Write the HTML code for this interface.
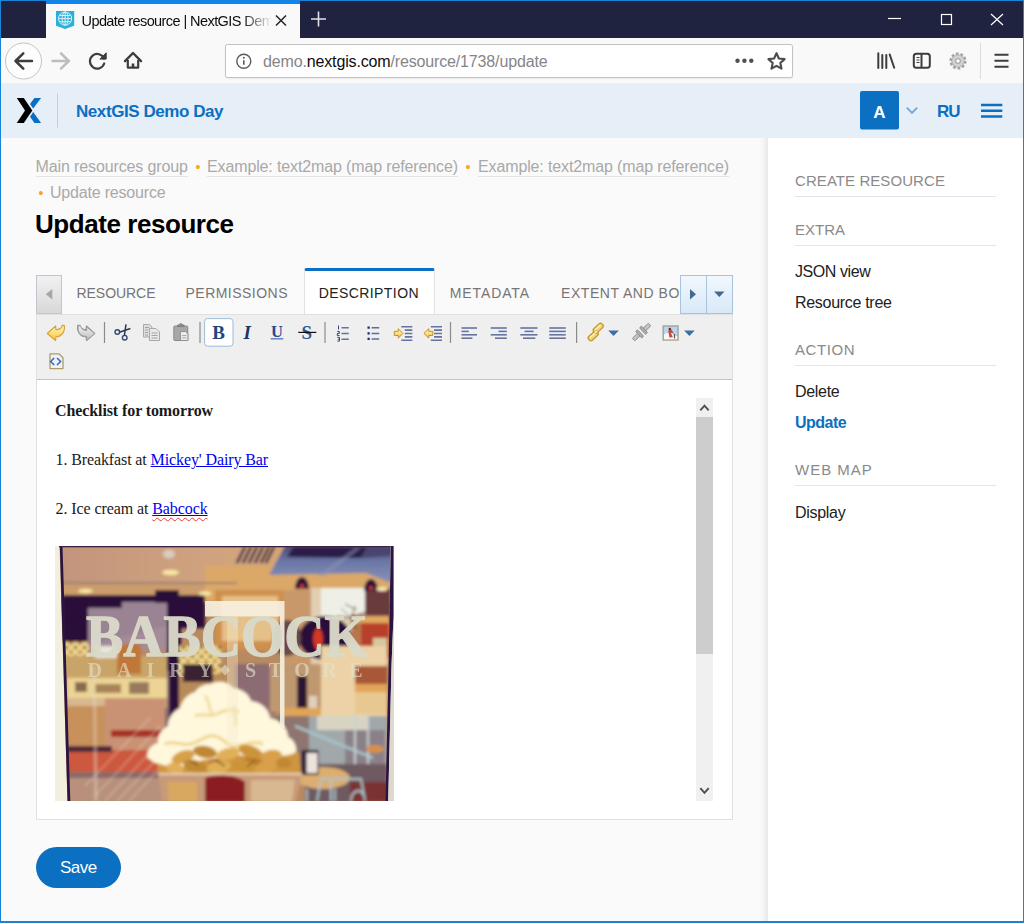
<!DOCTYPE html>
<html><head><meta charset="utf-8">
<style>
*{box-sizing:border-box;margin:0;padding:0}
html,body{width:1024px;height:923px;overflow:hidden;background:#fafafa;font-family:"Liberation Sans",sans-serif}
.abs{position:absolute}
#win{position:absolute;left:0;top:0;width:1024px;height:923px;overflow:hidden}
/* window border */
#bl{left:0;top:0;width:1.200px;height:923px;background:#1883d7}
#br{left:1022.800px;top:0;width:1.200px;height:923px;background:#1883d7}
#bb{left:0;top:921.400px;width:1024px;height:1.600px;background:#1883d7}
#bt{left:0;top:0;width:1024px;height:1px;background:#1883d7}
#titlebar{left:1px;top:1px;width:1022px;height:37px;background:#202340}
#tab{left:46px;top:0;width:254px;height:38px;background:#f9f9fa}
#tabline{left:46px;top:0;width:254px;height:3.5px;background:#0a84ff}
#tabtitle{left:81.500px;top:13.200px;font-size:14.500px;color:#0c0c0d;white-space:nowrap;width:190px;overflow:hidden;line-height:16px;-webkit-mask-image:linear-gradient(90deg,#000 0,#000 160px,transparent 190px);mask-image:linear-gradient(90deg,#000 0,#000 160px,transparent 190px)}
#navbar{left:1px;top:38px;width:1022px;height:45px;background:#f9f9fa}
#urlbar{left:225.300px;top:43.700px;width:567.700px;height:33.900px;background:#fff;border:1px solid #c2c2c3;border-radius:2.500px;box-shadow:0 1px 2px rgba(0,0,0,.06)}
#urltext{left:263px;top:52px;font-size:16px;line-height:20px;color:#858587;white-space:nowrap}
#urltext b{font-weight:normal;color:#0c0c0d}
#header{left:1px;top:83px;width:1022px;height:54.5px;background:#e6eef8}
#main{left:1px;top:137.5px;width:767px;height:784px;background:#fafafa}
#side{left:767.700px;top:137.5px;width:255.300px;height:784px;background:#fff}
#sideshadow{left:759px;top:137.5px;width:8.700px;height:784px;background:linear-gradient(90deg,rgba(0,0,0,0),rgba(0,0,0,.015) 40%,rgba(0,0,0,.075))}

#apptitle{left:76px;top:101.3px;font-size:17px;font-weight:700;color:#0b6fc2;letter-spacing:-.43px;line-height:22px;white-space:nowrap}
#abtn{left:860px;top:101.5px;width:39px;text-align:center;font-size:17px;font-weight:700;color:#fff;line-height:22px}
#ru{left:937px;top:101.3px;font-size:17px;font-weight:700;color:#0b6fc2;line-height:22px;letter-spacing:-1px}
#tabtitle{letter-spacing:-.58px}
#urltext{letter-spacing:-.15px}

.bc{font-size:16px;line-height:20px;color:#a9a9a9;white-space:nowrap}
.bc .l{border-bottom:1px solid #e3e3e3;padding-bottom:1px}
.dot{font-size:14px;line-height:20px;color:#f6a623}
#h1{left:35px;top:208px;font-size:26px;font-weight:700;line-height:32px;color:#000;letter-spacing:-.44px;white-space:nowrap}
#tleft{left:36px;top:275px;width:25.5px;height:38.5px;background:linear-gradient(#f1f1f1,#d8d8d8);border:1px solid #c0c6cf}
.tabt{top:284px;font-size:14px;line-height:18px;color:#757575;white-space:nowrap}
#acttab{left:304px;top:267.500px;width:130.5px;height:46.500px;background:#fff;border-top:3px solid #0b6fc2;border-left:1px solid #e2e2e2;border-right:1px solid #e2e2e2;border-radius:2.500px 2.500px 0 0;z-index:2}
#tright{left:680px;top:275px;width:27px;height:38.5px;background:linear-gradient(#f1f7fd,#d9e8f8);border:1px solid #a9c3de}
#tmenu{left:706px;top:275px;width:27px;height:38.5px;background:linear-gradient(#f1f7fd,#d9e8f8);border:1px solid #a9c3de}
#toolbar{left:36px;top:313.5px;width:697px;height:66.5px;background:#efefef;border-left:1px solid #e0e0e0;border-right:1px solid #e0e0e0;border-bottom:1px solid #b9c5d3;border-top:1px solid #e0e0e0}
#editor{left:36px;top:380px;width:697px;height:440px;background:#fff;border:1px solid #e0e0e0;border-top:none}
#sbtrack{left:696px;top:398px;width:17px;height:403px;background:#f0f0f0}
#sbthumb{left:696px;top:417px;width:17px;height:236.5px;background:#cdcdcd}
.ed{font-family:"Liberation Serif",serif;font-size:16px;line-height:20px;color:#1a1a1a;white-space:nowrap}
.ed a{color:#0000ee;text-decoration:underline}
.ed .sp{text-decoration:underline wavy #e8383a;text-decoration-thickness:1px;text-underline-offset:3px;text-decoration-skip-ink:none}

#save{left:36px;top:847px;width:84.5px;height:40.5px;border-radius:21px;background:#0b6fc2;color:#fff;font-size:17px;line-height:41.5px;text-align:center;letter-spacing:-.5px}
.sh{left:795px;font-size:15px;line-height:18px;color:#8a8a8a;white-space:nowrap}
.sl{left:795px;width:201px;height:1px;background:#dfe6ed}
.si{left:795px;font-size:16px;line-height:20px;color:#212121;white-space:nowrap}
</style></head><body>
<div id="win">
<div class="abs" id="titlebar"></div>
<div class="abs" id="tab"></div>
<div class="abs" id="tabline"></div>
<div class="abs" id="tabtitle">Update resource | NextGIS Dem</div>
<div class="abs" id="navbar"></div>
<div class="abs" id="urlbar"></div>
<div class="abs" id="urltext">demo.<b>nextgis.com</b>/resource/1738/update</div>
<div class="abs" id="header"></div>

<svg class="abs" id="chromesvg" style="left:0;top:0" width="1024" height="140" viewBox="0 0 1024 140">
 <!-- favicon -->
 <path d="M56 11h18.200v14.700l-9.100 3.300-9.100-3.300z" fill="#2ab0d9"/>
 <g fill="none" stroke="#d9f1f9" stroke-width="1">
  <circle cx="65.100" cy="18.600" r="6.600"/>
  <ellipse cx="65.100" cy="18.600" rx="3" ry="6.600"/>
  <path d="M58.500 18.600h13.200M65.100 12v13.200M59.500 15.500h11.200M59.500 21.700h11.200"/>
 </g>
 <!-- tab close -->
 <path d="M276 15.5l10 10M286 15.5l-10 10" stroke="#2a2a2e" stroke-width="1.6" fill="none"/>
 <!-- new tab plus -->
 <path d="M311 19h15M318.5 11.5v15" stroke="#e0e0e6" stroke-width="1.6" fill="none"/>
 <!-- window controls -->
 <path d="M888 18.5h13" stroke="#fff" stroke-width="1.2"/>
 <rect x="941.5" y="14.5" width="10" height="10" fill="none" stroke="#fff" stroke-width="1.2"/>
 <path d="M991 14l12 11M1003 14l-12 11" stroke="#fff" stroke-width="1.2" fill="none"/>
 <!-- back -->
 <circle cx="23.5" cy="61" r="18" fill="#fdfdfd" stroke="#c4c4c6" stroke-width="1"/>
 <path d="M32 61H15.5M23.3 53.4L15.5 61l7.8 7.6" fill="none" stroke="#3d3d3f" stroke-width="2.5" stroke-linecap="round" stroke-linejoin="round"/>
 <!-- forward -->
 <path d="M52.5 61H69M61 53.4l7.8 7.6-7.8 7.6" fill="none" stroke="#bdbdbe" stroke-width="2.5" stroke-linecap="round" stroke-linejoin="round"/>
 <!-- reload -->
 <path d="M104 58.5A7.3 7.3 0 1 0 104.2 63.5" fill="none" stroke="#3d3d3f" stroke-width="2.2" stroke-linecap="round"/>
 <path d="M106.2 52.8v6.3h-6.3z" fill="#3d3d3f" stroke="#3d3d3f" stroke-width="1" stroke-linejoin="round"/>
 <!-- home -->
 <path d="M125 61.2l8-8.2 8 8.2" fill="none" stroke="#3d3d3f" stroke-width="2.4" stroke-linecap="round" stroke-linejoin="round"/>
 <path d="M127.8 60v7.6h10.4V60" fill="none" stroke="#3d3d3f" stroke-width="2.2" stroke-linejoin="round"/>
 <rect x="131.7" y="63.5" width="2.6" height="4" fill="#3d3d3f"/>
 <!-- info -->
 <circle cx="243.8" cy="61.2" r="7" fill="none" stroke="#5a5a5c" stroke-width="1.4"/>
 <path d="M243.8 60.2v4.6" stroke="#5a5a5c" stroke-width="1.6"/><circle cx="243.8" cy="57.7" r="1" fill="#5a5a5c"/>
 <!-- dots -->
 <circle cx="737.500" cy="60.700" r="2.200" fill="#505052"/><circle cx="744.400" cy="60.700" r="2.200" fill="#505052"/><circle cx="751.300" cy="60.700" r="2.200" fill="#505052"/>
 <!-- star -->
 <path d="M776.5 53.2l2.4 5.3 5.7.6-4.3 3.9 1.2 5.7-5-2.9-5 2.9 1.2-5.7-4.3-3.9 5.7-.6z" fill="none" stroke="#4c4c4e" stroke-width="2.100" stroke-linejoin="round"/>
 <!-- library -->
 <path d="M878.300 53.300v14.700M882.300 55v13M886.300 55v13M889.700 54.500l4.500 13.300" stroke="#3d3d3f" stroke-width="2" stroke-linecap="round" fill="none"/>
 <!-- sidebar -->
 <rect x="913.8" y="53.8" width="16" height="14" rx="2.5" fill="none" stroke="#3d3d3f" stroke-width="2"/>
 <path d="M921.5 54v14" stroke="#3d3d3f" stroke-width="2"/>
 <path d="M916.5 57.5h3M916.5 60h3M916.5 62.5h3" stroke="#3d3d3f" stroke-width="1"/>
 <!-- gear -->
 <circle cx="958" cy="61" r="6.800" fill="#bcbcbc" stroke="#a2a2a2" stroke-width="3.600" stroke-dasharray="2.500 1.770"/>
 <circle cx="958" cy="61" r="6.200" fill="#c4c4c4"/>
 <circle cx="958" cy="61" r="4.300" fill="none" stroke="#d8d8d8" stroke-width="1.400"/>
 <circle cx="958" cy="61" r="2.300" fill="#fbfbfb" stroke="#989898" stroke-width=".9"/>
 <!-- sep -->
 <path d="M980.5 42.5v36.5" stroke="#dcdcdd" stroke-width="1"/>
 <!-- hamburger -->
 <path d="M994.5 54.7h14M994.5 60.7h14M994.5 66.7h14" stroke="#3d3d3f" stroke-width="2"/>
 <!-- logo -->
 <path d="M16.8 98h7l8.5 12.4-8.5 12.5h-7l8.2-12.5z" fill="#000"/>
 <path d="M34.4 98h6.7l-7.9 10.5-3.2-4.4z" fill="#0b70c4"/>
 <path d="M30 116.7l3.2-4.7 7.9 10.9h-6.7z" fill="#0b70c4"/>
 <path d="M57.5 93.3v34.2" stroke="#b9d1ea" stroke-width="1"/>
 <!-- A button -->
 <rect x="860" y="91" width="39" height="38.5" rx="2" fill="#0b6fc2"/>
 <path d="M906.800 107.600l5.200 5.200 5.200-5.200" fill="none" stroke="#6fa9dc" stroke-width="1.900"/>
 <path d="M981 105h21.300M981 110.800h21.300M981 116.500h21.300" stroke="#0b6fc2" stroke-width="2.500"/>
</svg>
<div class="abs" id="apptitle">NextGIS Demo Day</div>
<div class="abs" id="abtn">A</div>
<div class="abs" id="ru">RU</div>
<div class="abs" id="main"></div>
<div class="abs" id="side"></div><div class="abs" id="sideshadow"></div>

<!-- breadcrumbs -->
<div class="abs bc" style="left:35.5px;top:157px"><span class="l" style="letter-spacing:-.12px">Main resources group</span></div>
<div class="abs dot" style="left:195.5px;top:157px">•</div>
<div class="abs bc" style="left:207px;top:157px"><span class="l" style="letter-spacing:-.13px">Example: text2map (map reference)</span></div>
<div class="abs dot" style="left:465.5px;top:157px">•</div>
<div class="abs bc" style="left:478px;top:157px"><span class="l" style="letter-spacing:-.13px">Example: text2map (map reference)</span></div>
<div class="abs dot" style="left:38.5px;top:182.5px">•</div>
<div class="abs bc" style="left:50px;top:182.5px"><span style="letter-spacing:-.19px">Update resource</span></div>
<div class="abs" id="h1">Update resource</div>
<!-- tabs -->
<div class="abs" id="tleft"></div>
<div class="abs tabt" style="left:76.5px;letter-spacing:-.05px">RESOURCE</div>
<div class="abs tabt" style="left:185.5px;letter-spacing:.48px">PERMISSIONS</div>
<div class="abs" id="acttab"></div>
<div class="abs tabt" style="left:318.7px;letter-spacing:.42px;color:#212121;z-index:3">DESCRIPTION</div>
<div class="abs tabt" style="left:449.7px;letter-spacing:.9px">METADATA</div>
<div class="abs tabt" style="left:561px;letter-spacing:.55px;width:119px;overflow:hidden">EXTENT AND BOU</div>
<div class="abs" id="tright"></div>
<div class="abs" id="tmenu"></div>
<!-- toolbar -->
<div class="abs" id="toolbar"></div>
<div class="abs" id="editor"></div>
<div class="abs" id="sbtrack"></div>
<div class="abs" id="sbthumb"></div>
<div class="abs ed" style="left:55px;top:401px;font-weight:700;letter-spacing:-.1px">Checklist for tomorrow</div>
<div class="abs ed" style="left:55.5px;top:450px;letter-spacing:-.11px">1. Breakfast at <a>Mickey' Dairy Bar</a></div>
<div class="abs ed" style="left:55.5px;top:499px;letter-spacing:-.09px">2. Ice cream at <a><span class="sp">Babcock</span></a></div>

<svg class="abs" id="tbsvg" style="left:0;top:260px" width="760" height="160" viewBox="0 260 760 160">
 <defs>
  <linearGradient id="gy" x1="0" y1="0" x2="0" y2="1"><stop offset="0" stop-color="#fff6cc"/><stop offset=".5" stop-color="#fbe07c"/><stop offset="1" stop-color="#f5c04a"/></linearGradient>
  <linearGradient id="gg" x1="0" y1="0" x2="0" y2="1"><stop offset="0" stop-color="#f2f2f2"/><stop offset="1" stop-color="#bdbdbd"/></linearGradient>
 </defs>
 <!-- tab scroll arrows -->
 <path d="M52.300 289v10.600l-6.500-5.300z" fill="#a6a6a6"/>
 <path d="M690 289v10.5l6-5.2z" fill="#3f6a94"/>
 <path d="M714 291.5h10.5l-5.2 5.5z" fill="#3f6a94"/>
 <!-- undo -->
 <path d="M47.300 333.500L55.600 326L55.900 329.700C59.300 329.700 61.800 328.300 62.300 325.200L64.300 325.400C65.200 331.600 62 336.600 55.900 336.800L55.600 340.500z" fill="url(#gy)" stroke="#d6a136" stroke-width="1.100" stroke-linejoin="round"/>
 <!-- redo -->
 <path d="M94.700 333.500L86.400 326L86.100 329.700C82.700 329.700 80.200 328.300 79.700 325.200L77.700 325.400C76.800 331.600 80 336.600 86.100 336.800L86.400 340.500z" fill="url(#gg)" stroke="#8e9494" stroke-width="1.100" stroke-linejoin="round"/>
 <path d="M94.700 333.600l-8-6.600v3.600c-3.400-.2-5.600-1.600-6.200-5l-2.200.3c-1.100 6.300 2.200 10.600 8.400 10.600v3.900z" fill="url(#gg)" stroke="#9c9c9c" stroke-width="1" stroke-linejoin="round"/>
 <path d="M104.500 322v21M200 322v21M325 322v21M450.500 322v21M576.600 322v21" stroke="#8b8b8b" stroke-width="1.200"/>
 <!-- cut -->
 <g fill="none" stroke="#34496b" stroke-width="1.400">
  <circle cx="117.300" cy="332" r="2.300"/><circle cx="124.700" cy="337.700" r="2.300"/>
  <path d="M119.400 332.300L130.400 328.500M124.400 335.400L126 324.300" stroke="#2c3a55" stroke-width="1.500"/>
 </g>
 <!-- copy -->
 <g stroke="#a9a9a9" stroke-width="1" fill="#dedede">
  <path d="M143.500 324.500h6l2.500 2.500v10h-8.500z"/>
  <path d="M149.500 328.500h6.500l3.500 3.500v8.500h-10z" fill="#e9e9e9"/>
 </g>
 <path d="M145 327.500h4M145 330h3M145 332.500h3M145 335h3M151.500 333h6M151.500 335.500h6M151.500 338h6" stroke="#9a9a9a" stroke-width=".9"/>
 <!-- paste -->
 <rect x="173.800" y="326" width="14" height="14.500" rx="1" fill="#a7a7a7" stroke="#8a8a8a" stroke-width="1"/>
 <path d="M177.500 326.500v-1.500h1.500l.8-1.200h2l.8 1.200h1.500v1.500z" fill="#8d8d8d" stroke="#7a7a7a" stroke-width=".8"/>
 <path d="M180.500 331.500h5l2.500 2.500v6.500h-7.500z" fill="#ececec" stroke="#8c8c8c" stroke-width=".9"/>
 <path d="M182 335.500h4.500M182 337.800h4.500" stroke="#9a9a9a" stroke-width=".8"/>
 <!-- bold btn -->
 <rect x="204.600" y="318.600" width="28.400" height="27.600" rx="3" fill="#fff" stroke="#9dbbdb" stroke-width="1"/>
 <text x="218.600" y="339" text-anchor="middle" font-family="Liberation Serif" font-weight="700" font-size="19" fill="#1b4682">B</text>
 <text x="247.200" y="339" text-anchor="middle" font-family="Liberation Serif" font-weight="700" font-style="italic" font-size="19" fill="#1c3660">I</text>
 <text x="277" y="337.400" text-anchor="middle" font-family="Liberation Serif" font-weight="700" font-size="16.500" fill="#23498f">U</text>
 <path d="M270.700 338.800h12.600" stroke="#5b7cbc" stroke-width="1.400"/>
 <text x="306.700" y="339.300" text-anchor="middle" font-family="Liberation Serif" font-weight="700" font-size="19" fill="#2a5597">S</text>
 <path d="M298.300 332.400h18" stroke="#111" stroke-width="1.200"/>
 <!-- numbered list -->
 <path d="M341.500 327.800h7.300M341.500 333.500h7.300M341.500 339.200h7.300" stroke="#6673a1" stroke-width="1.600"/>
 <path d="M338.500 325.500v4M337.300 331.500h2v2h-2v2h2.200M337.300 337.300h2.200v3.800h-2.200M337.800 339.200h1.700" stroke="#33478a" stroke-width="1" fill="none"/>
 <!-- bullet list -->
 <path d="M371.600 327.800h7.600M371.600 333.400h7.600M371.600 339h7.600" stroke="#5d6c9c" stroke-width="1.500"/>
 <path d="M367.500 327.700h2.200M367.500 333.300h2.200M367.500 338.900h2.200" stroke="#1b2b6a" stroke-width="2.200"/>
 <!-- outdent (arrow right) -->
 <path d="M401.300 326.800h11M404.800 330.100h7.500M404.800 333.500h7.500M404.800 336.900h7.500M401.300 340.200h11" stroke="#6673a1" stroke-width="1.600"/>
 <path d="M394.300 331.300h4v-2.600l4.600 4.700-4.600 4.700v-2.600h-4z" fill="url(#gy)" stroke="#c98f22" stroke-width="1" stroke-linejoin="round"/>
 <!-- indent (arrow left) -->
 <path d="M430.800 326.800h11.200M434 330.100h8M434 333.500h8M434 336.900h8M430.800 340.200h11.200" stroke="#6673a1" stroke-width="1.600"/>
 <path d="M432.800 331.300h-4v-2.600l-4.900 4.700 4.900 4.700v-2.600h4z" fill="url(#gy)" stroke="#c98f22" stroke-width="1" stroke-linejoin="round"/>
 <!-- aligns -->
 <path d="M461.5 328H477" stroke="#6673a1" stroke-width="1.6"/><path d="M461.5 331.4H468.8" stroke="#6673a1" stroke-width="1.6"/><path d="M461.5 334.8H477" stroke="#6673a1" stroke-width="1.6"/><path d="M461.5 338.2H472.4" stroke="#6673a1" stroke-width="1.6"/><path d="M490.7 328H506.8" stroke="#6673a1" stroke-width="1.6"/><path d="M498.5 331.4H506.8" stroke="#6673a1" stroke-width="1.6"/><path d="M490.7 334.8H506.8" stroke="#6673a1" stroke-width="1.6"/><path d="M495 338.2H506.8" stroke="#6673a1" stroke-width="1.6"/><path d="M520.3 328H537.5" stroke="#6673a1" stroke-width="1.6"/><path d="M524.6 331.4H533.6" stroke="#6673a1" stroke-width="1.6"/><path d="M520.3 334.8H537.5" stroke="#6673a1" stroke-width="1.6"/><path d="M523 338.2H535.3" stroke="#6673a1" stroke-width="1.6"/><path d="M549.3 328H565.8" stroke="#6673a1" stroke-width="1.6"/><path d="M549.3 331.4H565.8" stroke="#6673a1" stroke-width="1.6"/><path d="M549.3 334.8H565.8" stroke="#6673a1" stroke-width="1.6"/><path d="M549.3 338.2H565.8" stroke="#6673a1" stroke-width="1.6"/>
 <!-- link -->
 <g transform="rotate(-43 595.800 332.100)" stroke-linejoin="round">
  <rect x="585.600" y="330.500" width="11.500" height="5.200" rx="2.400" fill="#f3d67a" stroke="#c39a2c" stroke-width="1.300"/>
  <rect x="594.500" y="328.300" width="11.500" height="5.200" rx="2.400" fill="#f3d67a" stroke="#c39a2c" stroke-width="1.300"/>
  <path d="M588 332.200h7M597 330h7" stroke="#fdf2c0" stroke-width="1.200"/>
  <rect x="594.300" y="330.900" width="3.200" height="2.400" rx="1" fill="#f4f4f4" stroke="#c39a2c" stroke-width=".7"/>
 </g>
 <path d="M608.200 330.400h10.600l-5.300 5.700z" fill="#3f6f9f"/>
 <!-- unlink -->
 <g transform="rotate(-43 641.500 332)">
  <rect x="630.500" y="330.300" width="8" height="3.600" rx="1" fill="#c4c4c4" stroke="#8a8a8a" stroke-width=".9"/>
  <rect x="637.500" y="327.600" width="2.600" height="9" rx=".8" fill="#b0b0b0" stroke="#858585" stroke-width=".9"/>
  <rect x="644.500" y="330.300" width="8" height="3.600" rx="1" fill="#c4c4c4" stroke="#8a8a8a" stroke-width=".9"/>
  <rect x="642.900" y="327.600" width="2.600" height="9" rx=".8" fill="#b0b0b0" stroke="#858585" stroke-width=".9"/>
 </g>
 <!-- image -->
 <rect x="663.200" y="326" width="14.800" height="14" fill="#b9d3f3" stroke="#aaa694" stroke-width="1.500"/>
 <path d="M664 334.500l3-1.500 3 1 3 2 2-.5 2.200 1v2.700h-13.200z" fill="#f7f9fc"/>
 <path d="M668.200 330.600l3-1.400 2.200 3.400-.6 4.600-3.400.2z" fill="#d2473c"/>
 <path d="M671.600 333l2.800 5.400" stroke="#fff" stroke-width="1.300"/>
 <path d="M674.500 334v4.500" stroke="#4a5a60" stroke-width="1.200"/>
 <circle cx="669.800" cy="329" r="1.200" fill="#4a3028"/>
 <path d="M684.100 330.400h10.600l-5.300 5.700z" fill="#3f6f9f"/>
 <!-- source -->
 <path d="M50 353.800h9l4 4v10.800h-13z" fill="#edf1f8" stroke="#b09a6b" stroke-width="1.300" stroke-linejoin="round"/>
 <path d="M54.200 358l-3.600 3.500 3.600 3.500M57 358l3.600 3.500-3.600 3.500" fill="none" stroke="#3468b3" stroke-width="1.500"/>
 <!-- editor scrollbar arrows -->
 <path d="M700.300 410.300l4.200-4.600 4.200 4.600" fill="none" stroke="#505050" stroke-width="2"/>
</svg>
<svg class="abs" style="left:690px;top:780px" width="30" height="25" viewBox="690 780 30 25"><path d="M700.300 788.200l4.200 4.600 4.200-4.600" fill="none" stroke="#505050" stroke-width="2"/></svg>
<!--PHOTO--><svg class="abs" id="photo" style="left:55px;top:546px" width="338.5" height="255" viewBox="0 0 338.5 255" preserveAspectRatio="none">
 <defs>
  <filter id="b1" x="-5%" y="-5%" width="110%" height="110%"><feGaussianBlur stdDeviation="1.4"/></filter>
  <filter id="b2" x="-5%" y="-5%" width="110%" height="110%"><feGaussianBlur stdDeviation="2.2"/></filter>
  <filter id="b0"><feGaussianBlur stdDeviation=".5"/></filter>
  <linearGradient id="ceil" x1="0" y1="0" x2="1" y2="0"><stop offset="0" stop-color="#c2947c"/><stop offset=".45" stop-color="#cfa37e"/><stop offset="1" stop-color="#d9a96e"/></linearGradient>
  <linearGradient id="blu" x1="0" y1="0" x2="0" y2="1"><stop offset="0" stop-color="#4a4874"/><stop offset=".4" stop-color="#6a76a6"/><stop offset="1" stop-color="#8a94b6"/></linearGradient>
  <pattern id="dots" width="9" height="9" patternUnits="userSpaceOnUse"><rect width="9" height="9" fill="#ecd488"/><circle cx="2.5" cy="2.5" r="1.5" fill="#3a1a30"/><circle cx="7" cy="7" r="1.5" fill="#a8402a"/></pattern>
  <clipPath id="pc"><rect width="338.5" height="255"/></clipPath>
 </defs>
 <g clip-path="url(#pc)">
 <rect width="338.5" height="255" fill="#b88a62"/>
 <g filter="url(#b1)">
  <!-- ceiling -->
  <rect x="0" y="0" width="338.5" height="52" fill="url(#ceil)"/>
  <rect x="6" y="37" width="175" height="13" fill="#cb9c6c"/>
  <rect x="150" y="20" width="188" height="36" fill="#dba868"/>
  <path d="M7 37H182" stroke="#8c7672" stroke-width="1.600"/>
  <!-- dark band -->
  <path d="M7 49H150V82H60L30 96H7z" fill="#2a1038"/>
  <!-- brick reflection -->
  <path d="M33 62H67V56H112V104H33z" fill="#a48c98"/>
  <path d="M33 62H67V56H112V80L33 100z" fill="#9a8494"/>
  <!-- dark column -->
  <rect x="100" y="44" width="24" height="13" fill="#2a1038"/><rect x="112" y="55" width="14" height="85" fill="#2a1038"/>
  <rect x="114" y="120" width="10" height="68" fill="#2a1038"/>
  <rect x="101" y="125" width="13" height="62" fill="#8a6a70"/>
  <!-- vent -->
  <path d="M187 0H221L210 18H178z" fill="#c8a080"/>
  <path d="M190 1l-8 16M196 1l-8 16M202 1l-8 16M208 1l-8 16M214 1l-8 16M219 1l-8 16" stroke="#3a1c30" stroke-width="2.6"/>
  <!-- blue area top right -->
  <path d="M230 0H338V38L311 27L214 29z" fill="url(#blu)"/>
  <path d="M238 1H312L306 12L232 11z" fill="#2c1c46"/><path d="M312 1H338V10L306 12z" fill="#4a4470"/>
  <path d="M262 30L300 2L306 2L270 30z" fill="#8a90b8" opacity=".55"/>
  <!-- wood frame & interior right -->
  <rect x="160" y="44" width="70" height="60" fill="#cf8f4e"/>
  <rect x="167" y="50" width="56" height="45" fill="#e6c089"/>
  <rect x="228" y="44" width="40" height="120" fill="#c8986a"/>
  <!-- window -->
  <rect x="266" y="42" width="46" height="28" fill="#eef0e6"/><rect x="266" y="70" width="30" height="34" fill="#dccdb0"/><rect x="296" y="68" width="16" height="36" fill="#b87850"/>
  <path d="M286 62l10 10l4-12M296 72l6 12M290 58l12 6M296 72l14-6M282 70l14 2" stroke="#4a4038" stroke-width=".9" fill="none"/>
  <rect x="256" y="42" width="10" height="130" fill="#e2cfb2"/>
  <!-- right shelf -->
  <rect x="310" y="42" width="26" height="34" fill="#6a3a3c"/>
  <rect x="300" y="70" width="34" height="7" fill="#e0a860"/>
  <rect x="306" y="77" width="28" height="38" fill="#b8402c"/>
  <rect x="318" y="92" width="14" height="14" fill="#d8c8a0"/>
  <rect x="300" y="112" width="34" height="6" fill="#d8a060"/>
  <!-- lamps -->
  <path d="M240 43a7 12 0 0 1 14 0z" fill="#2a1038"/><circle cx="247" cy="40" r="2" fill="#d8402c"/>
  <path d="M309 45a7 12 0 0 1 14 0z" fill="#2a1038"/><circle cx="316" cy="42" r="2" fill="#d8402c"/>
  <ellipse cx="327" cy="43" rx="6" ry="2" fill="#f8e8b0"/>
  <!-- lights -->
  <ellipse cx="30.500" cy="45" rx="7.500" ry="2.200" fill="#f8e6a4"/>
  <ellipse cx="115.500" cy="26.500" rx="8.500" ry="2.800" fill="#f8e6a4"/>
  <ellipse cx="150" cy="47.500" rx="6.500" ry="2.200" fill="#f8e6a4"/>
  <ellipse cx="114" cy="8" rx="6" ry="4.500" fill="#dccabc"/>
  <!-- mid band -->
  <rect x="8" y="96" width="26" height="40" fill="url(#dots)"/>
  <rect x="124" y="100" width="42" height="36" fill="url(#dots)"/>
  <rect x="8" y="110" width="104" height="52" fill="#c9a468"/><rect x="40" y="100" width="22" height="12" fill="#e8e4d8"/><rect x="62" y="98" width="24" height="30" fill="#c07838"/>
  
  
  
  <rect x="124" y="128" width="46" height="30" fill="#b88a58"/>
  <rect x="128" y="118" width="30" height="18" fill="#3a2430"/>
  <!-- dark behind CK -->
  <ellipse cx="270" cy="92" rx="26" ry="22" fill="#2a1038"/>
  <ellipse cx="232" cy="92" rx="14" ry="18" fill="#6a4a48"/>
  <ellipse cx="263" cy="93" rx="5" ry="11" fill="#d43824"/>
  <!-- counter etc -->
  <rect x="12" y="158" width="40" height="48" fill="#c8905a"/>
  <rect x="12" y="150" width="40" height="10" fill="#d8b890"/>
  <rect x="50" y="152" width="60" height="56" fill="#c99274"/><rect x="12" y="132" width="100" height="20" fill="#ecd494"/><rect x="20" y="136" width="12" height="10" fill="#8a6a50"/><rect x="40" y="138" width="26" height="9" fill="#a88458"/><rect x="74" y="136" width="20" height="12" fill="#9a7a5c"/>
  <rect x="56" y="184" width="66" height="7" fill="#a83222"/>
  <rect x="12" y="204" width="112" height="28" fill="#cc583c"/>
  <rect x="12" y="200" width="45" height="6" fill="#4a2838"/>
  <rect x="12" y="230" width="112" height="26" fill="#b8907c"/>
  <rect x="12" y="226" width="112" height="6" fill="#8a6a68"/>
  <path d="M41 255L39 120" stroke="#e8d8c8" stroke-width="3" opacity=".45"/>
  <path d="M40 250L105 180M50 255L112 188M62 255L118 196M30 240L95 172M74 255L122 204" stroke="#f0d8c8" stroke-width="1.200" opacity=".45"/>
  <!-- right-bottom -->
  <rect x="180" y="118" width="40" height="50" fill="#8c6c72"/>
  <rect x="215" y="118" width="55" height="48" fill="#c09870"/>
  <rect x="242" y="130" width="10" height="32" fill="#2a1830"/>
  <rect x="254" y="150" width="8" height="14" fill="#e0d0c0"/>
  <rect x="228" y="162" width="50" height="9" fill="#e2a456"/>
  <rect x="195" y="170" width="60" height="60" fill="#8e7470"/>
  <rect x="266" y="100" width="66" height="70" fill="#ecd2a6"/>
  <rect x="300" y="120" width="32" height="20" fill="#a85838"/>
  <rect x="300" y="138" width="32" height="8" fill="#e2a456"/>
  <rect x="300" y="146" width="32" height="22" fill="#e8c890"/>
  <rect x="254" y="170" width="78" height="50" fill="#a0a8aa"/>
  <rect x="262" y="170" width="50" height="14" fill="#d8d4c4"/>
  <rect x="290" y="184" width="40" height="40" fill="#8a8088"/>
  <path d="M240 180L318 212" stroke="#a8c4cc" stroke-width="2.500"/>
  <path d="M300 168V225M313 168V225" stroke="#c8d0d0" stroke-width="2"/>
  <rect x="250" y="218" width="82" height="38" fill="#6e5a60"/><rect x="295" y="236" width="38" height="20" fill="#7a3230"/>
  <ellipse cx="320" cy="203" rx="9" ry="4" fill="#d89048"/>
  <!-- table -->
  <ellipse cx="268" cy="232" rx="27" ry="11" fill="#dcae70"/>
  <rect x="246.500" y="204" width="17" height="25" rx="1" fill="#2a1830"/>
  <rect x="251.500" y="207" width="11" height="20" fill="#ece4dc"/>
  <path d="M262 255l4-22h40l4 22M276 255v-20M296 255c0-10 10-14 12-6" stroke="#a8c4cc" stroke-width="2" fill="none"/>
  <path d="M252 243v12M280 243v12" stroke="#a8b8c0" stroke-width="2"/>
  <!-- sundae -->
  <path d="M103 227h144l-6 29H107z" fill="#c89a78"/>
  <path d="M150 232c10-4 30-4 40 4v20h-40z" fill="#8a1a24"/>
  <path d="M112 236h30v20h-28z" fill="#d8a860"/>
  <path d="M196 234h44l-3 22h-41z" fill="#d8b890"/>
  <path d="M100 206c20-10 40-8 60-4s60 6 84 4l2 22H104z" fill="#cf9640"/>
  <path d="M118 214l16-8 10 4-14 12zM150 212l18-6 8 6-16 10zM184 216l14-8 12 4-12 10z" fill="#b9792a"/>
  <path d="M93 213c-3-7 3-14 10-16c-1-8 4-14 10-17c0-8 5-15 12-18c2-8 8-14 15-16c3-5 9-8 16-8c6-4 18-3 22 4c9 1 16 6 18 13c10 1 18 8 19 17c10 2 18 10 18 19c6 3 9 9 8 15c-8 5-20 5-30 0c-12 5-26 5-36 0c-8 5-18 8-28 8c-10 8-30 9-42 4c-5-1-8-2-10-5z" fill="#fff8dc"/>
  <path d="M110 198c10-4 16 2 26 0s14-10 24-8s10 10 20 10s18-6 28-2" stroke="#efd48c" stroke-width="3" fill="none"/><path d="M150 150c6 6 2 12 8 18M180 160c-4 8 4 12 0 20" stroke="#f0d898" stroke-width="2.500" fill="none"/>
  <path d="M140 170c8-4 14 2 22-2s14-6 22-2" stroke="#f0da98" stroke-width="3" fill="none"/>
  <g><ellipse cx="128" cy="211" rx="12" ry="6" transform="rotate(-20 128 211)" fill="#d8a048"/><ellipse cx="150" cy="206" rx="12" ry="6" transform="rotate(10 150 206)" fill="#c08830"/><ellipse cx="173" cy="208" rx="12" ry="6" transform="rotate(-15 173 208)" fill="#e0b058"/><ellipse cx="196" cy="206" rx="13" ry="6" transform="rotate(20 196 206)" fill="#cc9438"/><ellipse cx="216" cy="210" rx="11" ry="6" transform="rotate(-10 216 210)" fill="#d8a048"/><ellipse cx="140" cy="220" rx="12" ry="6" transform="rotate(15 140 220)" fill="#c08830"/><ellipse cx="164" cy="221" rx="12" ry="6" transform="rotate(-10 164 221)" fill="#e0b058"/><ellipse cx="189" cy="220" rx="12" ry="6" transform="rotate(10 189 220)" fill="#cc9438"/><ellipse cx="211" cy="221" rx="12" ry="6" transform="rotate(-20 211 221)" fill="#d8a048"/><ellipse cx="229" cy="217" rx="8" ry="5" transform="rotate(0 229 217)" fill="#c08830"/><ellipse cx="120" cy="222" rx="9" ry="5" transform="rotate(10 120 222)" fill="#e0b058"/><path d="M160 214l10 6M200 213l-8 8M135 215l8 4" stroke="#8a5a20" stroke-width="1.500"/></g><path d="M103 228h144" stroke="#f0e0c8" stroke-width="2" opacity=".8"/>
 </g>
 <!-- white reflection frame -->
 <g filter="url(#b0)">
  <path d="M150 55H229.500V182H225V70.500H150z" fill="#f6f2e2" opacity=".9"/><path d="M172 70.500H183V200H172z" fill="#f6ecd0" opacity=".4"/>
  
  <!-- text -->
  <text x="31" y="109.500" font-family="Liberation Serif" font-weight="700" font-size="59" textLength="282" lengthAdjust="spacingAndGlyphs" fill="#dadaca" stroke="#dadaca" stroke-width="1.300" opacity=".96">BABCOCK</text>
  <g fill="#e6e2ce" opacity=".62" font-family="Liberation Serif" font-weight="700" font-size="20"><text x="32.500" y="130.500" textLength="125" lengthAdjust="spacing">DAIRY</text><text x="190" y="130.500" textLength="117.500" lengthAdjust="spacing">STORE</text><path d="M170 118.500l5 5.500-5 5.500-5-5.500z"/></g>
 </g>
 <!-- edges -->
 <path d="M0 0H4.500L12.500 255H0z" fill="#f3efdf"/>
 <path d="M4.800 0H7.500L15.300 255H12.500z" fill="#2b1440"/>
 <rect x="4" y="0" width="334" height="1.300" fill="#3a2244"/>
 <path d="M335.500 0H338.500V255H333L334 120z" fill="#d9d5ca"/>
 <path d="M335.800 0H338.500V70L336.500 120L333.200 255H330.500L333.600 120z" fill="#2b1440"/>
 <path d="M336.500 120L338.500 70V255H333.200z" fill="#dcd8cc"/>
 </g>
</svg>
<!--/PHOTO-->
<div class="abs" id="save">Save</div>

<div class="abs sh" style="top:172px;letter-spacing:.07px">CREATE RESOURCE</div><div class="abs sl" style="top:196px"></div>
<div class="abs sh" style="top:221px;letter-spacing:.0px">EXTRA</div><div class="abs sl" style="top:245px"></div>
<div class="abs si" style="top:261.7px;letter-spacing:-.42px">JSON view</div>
<div class="abs si" style="top:292.7px;letter-spacing:-.3px">Resource tree</div>
<div class="abs sh" style="top:341px;letter-spacing:.6px">ACTION</div><div class="abs sl" style="top:365px"></div>
<div class="abs si" style="top:382px;letter-spacing:-.3px">Delete</div>
<div class="abs si" style="top:413px;letter-spacing:-.5px;font-weight:700;color:#0b6fc2">Update</div>
<div class="abs sh" style="top:461px;letter-spacing:1px">WEB MAP</div><div class="abs sl" style="top:485px"></div>
<div class="abs si" style="top:502.7px;letter-spacing:-.3px">Display</div>
<div class="abs" id="bt"></div><div class="abs" id="bl"></div><div class="abs" id="br"></div><div class="abs" id="bb"></div>
</div>
</body></html>
